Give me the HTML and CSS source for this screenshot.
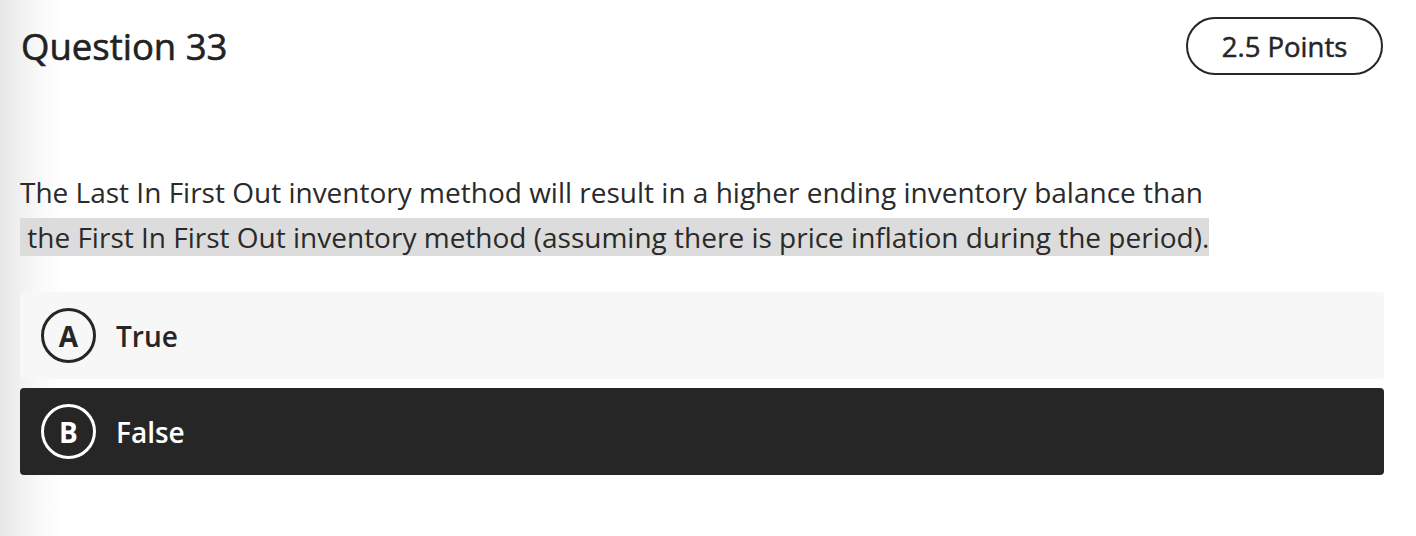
FILE: index.html
```html
<!DOCTYPE html>
<html>
<head>
<meta charset="utf-8">
<link rel="stylesheet" href="styles.css">
</head>
<body>
<main class="question">
  <header class="q-header">
    <h1 class="q-title">Question 33</h1>
    <span class="q-points">2.5 Points</span>
  </header>
  <p class="q-text">The Last In First Out inventory method will result in a higher ending inventory balance than<br><span class="hl">&nbsp;the First In First Out inventory method (assuming there is price inflation during the period).</span></p>
  <div class="options">
    <div class="option">
      <span class="badge">A</span>
      <span class="label">True</span>
    </div>
    <div class="option selected">
      <span class="badge">B</span>
      <span class="label">False</span>
    </div>
  </div>
</main>
</body>
</html>
```
FILE: styles.css
```css
* { box-sizing: border-box; }
html, body { margin: 0; height: 100%; }
body {
  font-family: "Open Sans", "Liberation Sans", sans-serif;
  color: #262626;
  background: linear-gradient(to right, #e6e6e6 0px, #f3f3f3 25px, #fbfbfb 45px, #ffffff 65px);
}
.question {
  padding: 17px 32px 0 20px;
}
.q-header {
  display: flex;
  justify-content: space-between;
  align-items: center;
  height: 58px;
}
.q-title {
  margin: 0;
  font-size: 36.5px;
  font-weight: 400;
  -webkit-text-stroke: 0.6px #222;
  line-height: 1;
  padding-left: 1px;
  color: #222;
}
.q-points {
  display: flex;
  align-items: center;
  justify-content: center;
  height: 58px;
  width: 197px;
  margin-right: 1px;
  border: 2px solid #262626;
  border-radius: 29px;
  font-size: 27.5px;
  font-weight: 400;
  -webkit-text-stroke: 0.5px #262626;
}
.q-text {
  margin: 95px 0 0 0;
  font-size: 28px;
  line-height: 45px;
  font-weight: 400;
  color: #2a2a2a;
}
.hl {
  background: #dcdcdc;
}
.options {
  margin-top: 32px;
  display: flex;
  flex-direction: column;
  gap: 9px;
}
.option {
  display: flex;
  align-items: center;
  gap: 20px;
  height: 87px;
  padding-left: 21px;
  background: #f7f7f7;
  border-radius: 4px;
}
.option.selected {
  background: #262626;
  color: #fff;
}
.badge {
  width: 55px;
  height: 55px;
  border: 3px solid currentColor;
  border-radius: 50%;
  display: flex;
  align-items: center;
  justify-content: center;
  font-size: 28px;
  font-weight: 700;
  flex: none;
}
.label {
  font-size: 28px;
  font-weight: 600;
}
```
